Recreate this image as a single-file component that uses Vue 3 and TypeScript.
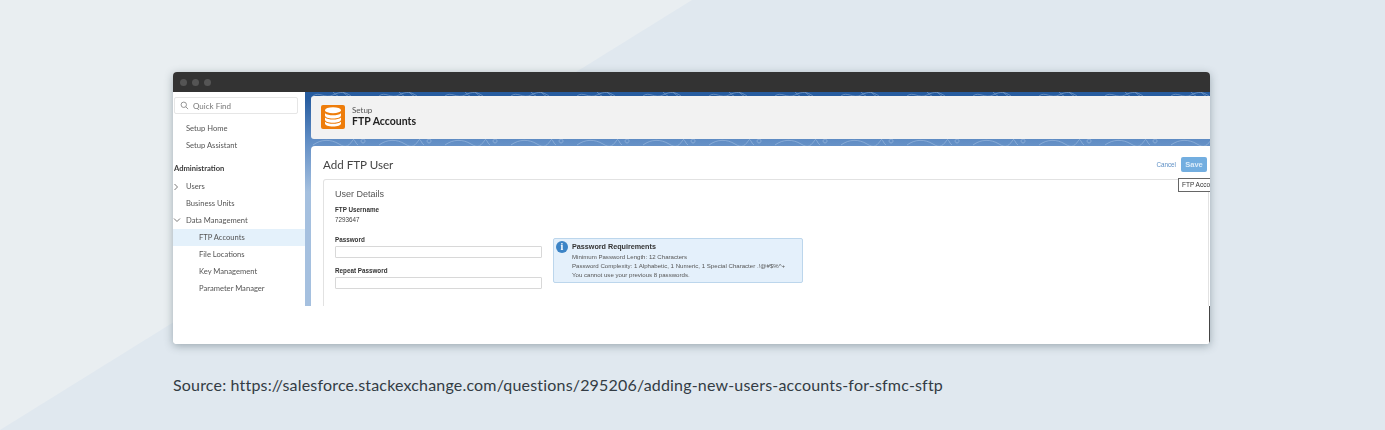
<template>
  <div class="page">
    <div class="bg-shape"></div>
    <div class="window">
      <div class="titlebar">
        <span v-for="n in 3" :key="n" class="dot"></span>
      </div>
      <div class="shot">
        <aside class="sidebar">
          <div class="quick-find">
            <svg width="9" height="9" viewBox="0 0 10 10" fill="none" stroke="#8a8a8a" stroke-width="1">
              <circle cx="4.2" cy="4.2" r="3" />
              <path d="M6.4 6.4 9 9" />
            </svg>
            <span>Quick Find</span>
          </div>
          <div class="nav-item top">Setup Home</div>
          <div class="nav-item">Setup Assistant</div>
          <div class="nav-head">Administration</div>
          <div
            v-for="item in navItems"
            :key="item.label"
            class="nav-item"
            :class="{ sub: item.sub, active: item.active }"
          >
            <svg v-if="item.caret === 'right'" class="caret" width="6" height="8" viewBox="0 0 6 8" fill="none" stroke="#555" stroke-width="0.8">
              <path d="M1.5 1 4.5 4 1.5 7" />
            </svg>
            <svg v-if="item.caret === 'down'" class="caret" width="8" height="6" viewBox="0 0 8 6" fill="none" stroke="#555" stroke-width="0.8">
              <path d="M1 1.5 4 4.5 7 1.5" />
            </svg>
            {{ item.label }}
          </div>
        </aside>
        <main class="main">
          <svg class="contours" width="905" height="60" viewBox="0 0 905 60" fill="none" stroke="#cfe0f3" stroke-width="0.7" opacity="0.5">
            <path v-for="(d, i) in contours" :key="i" :d="d" />
          </svg>
          <header class="setup-card">
            <div class="setup-icon">
              <svg width="18" height="20" viewBox="0 0 18 20" fill="#fff">
                <ellipse cx="9" cy="3.2" rx="8" ry="3" />
                <path d="M1 6.2c1.6 1.4 4.6 2 8 2s6.400-.6 8-2v2.200c0 1.700-3.600 3-8 3s-8-1.300-8-3Z" />
                <path d="M1 10.600c1.600 1.400 4.600 2 8 2s6.400-.6 8-2v2.200c0 1.700-3.600 3-8 3s-8-1.300-8-3Z" />
                <path d="M1 14.800c1.600 1.400 4.600 2 8 2s6.400-.6 8-2v1.700c0 1.700-3.600 3-8 3s-8-1.300-8-3Z" />
              </svg>
            </div>
            <div class="setup-text">
              <div class="setup-label">Setup</div>
              <div class="setup-title">FTP Accounts</div>
            </div>
          </header>
          <section class="form-card">
            <div class="form-head">
              <h2>Add FTP User</h2>
              <div class="actions">
                <span class="cancel">Cancel</span>
                <span class="save">Save</span>
              </div>
              <div class="tooltip">FTP Accounts</div>
            </div>
            <div class="details">
              <h3>User Details</h3>
              <div class="field-label">FTP Username</div>
              <div class="username">7293647</div>
              <div class="password-row">
                <div class="inputs">
                  <label class="field-label">Password</label>
                  <div class="input"></div>
                  <label class="field-label second">Repeat Password</label>
                  <div class="input"></div>
                </div>
                <div class="requirements">
                  <span class="info-icon">i</span>
                  <div>
                    <div class="req-title">Password Requirements</div>
                    <div v-for="line in requirements" :key="line" class="req-line">{{ line }}</div>
                  </div>
                </div>
              </div>
            </div>
          </section>
        </main>
      </div>
      <div class="window-foot"></div>
    </div>
    <p class="source">Source: https://salesforce.stackexchange.com/questions/295206/adding-new-users-accounts-for-sfmc-sftp</p>
  </div>
</template>

<script setup lang="ts">
interface NavItem {
  label: string
  sub?: boolean
  active?: boolean
  caret?: 'right' | 'down'
}

const navItems: NavItem[] = [
  { label: 'Users', caret: 'right' },
  { label: 'Business Units' },
  { label: 'Data Management', caret: 'down' },
  { label: 'FTP Accounts', sub: true, active: true },
  { label: 'File Locations', sub: true },
  { label: 'Key Management', sub: true },
  { label: 'Parameter Manager', sub: true },
]

const requirements = [
  'Minimum Password Length: 12 Characters',
  'Password Complexity: 1 Alphabetic, 1 Numeric, 1 Special Character .!@#$%^+',
  'You cannot use your previous 8 passwords.',
]

// topographic lines in the blue banner, top strip then the band between the cards
const contours = Array.from({ length: 14 }, (_, i) => {
  const x = i * 66 + 8
  return [
    `M${x} 4c6-5 12 3 20-1s12-3 18 1`,
    `M${x + 20} 0c3 2 2 3 5 4M${x + 30} 0c3 2 2 3 5 4`,
    `M${x} 53c8-6 18-6 26-1s10 1 14-4`,
    `M${x + 40} 47c3 2 2 4 5 6M${x + 50} 47a2 2 0 1 0 .1 0`,
  ].join('')
})
</script>

<style>
html,
body {
  margin: 0;
  padding: 0;
}
</style>

<style scoped>
.page {
  position: relative;
  width: 1385px;
  height: 430px;
  overflow: hidden;
  background: #e0e8ef;
  padding: 72px 175px 0 173px;
  box-sizing: border-box;
  font-family: Lato, sans-serif;
}

.bg-shape {
  position: absolute;
  inset: 0;
  background: #e9eef1;
  clip-path: polygon(0 0, 692px 0, 0 430px);
}

.window {
  position: relative;
  width: 1037px;
  height: 272px;
  border-radius: 4px;
  background: #fff;
  overflow: hidden;
  box-shadow: 0 2px 9px rgba(70, 90, 100, 0.45);
  display: flex;
  flex-direction: column;
}

.titlebar {
  height: 20px;
  flex: none;
  background: #333;
  display: flex;
  align-items: center;
  gap: 5px;
  padding: 0 7px;
}

.dot {
  width: 7px;
  height: 7px;
  border-radius: 50%;
  background: #555;
}

.shot {
  display: flex;
  height: 214px;
  flex: none;
  filter: blur(0.35px);
}

.sidebar {
  width: 132px;
  flex: none;
  background: #fff;
  padding-top: 5px;
  font-size: 7.6px;
  color: #555;
}

.quick-find {
  height: 17px;
  margin: 0 7px 0 1px;
  border: 1px solid #e6e6e6;
  border-radius: 2px;
  display: flex;
  align-items: center;
  gap: 4px;
  padding-left: 5px;
  font-size: 8px;
  color: #777;
  box-sizing: border-box;
}

.nav-item {
  position: relative;
  height: 17px;
  line-height: 17px;
  padding-left: 13px;
}

.nav-item.top {
  margin-top: 6px;
}

.nav-item.sub {
  padding-left: 26px;
}

.nav-item.active {
  background: #e4f1fb;
}

.nav-head {
  height: 17px;
  line-height: 17px;
  margin-top: 6px;
  margin-bottom: 1px;
  font-weight: 700;
  color: #3a3a3a;
  padding-left: 1px;
}

.caret {
  position: absolute;
  left: 0;
  top: 5px;
}

.main {
  position: relative;
  flex: 1;
  min-width: 0;
  overflow: hidden;
  background: linear-gradient(180deg, #275c9f 0, #275c9f 6px, #5f8cc4 48px, #a5c0df 100px);
  padding: 4px 0 0 6px;
}

.contours {
  position: absolute;
  left: 0;
  top: 0;
}

.setup-card {
  position: relative;
  height: 43px;
  box-sizing: border-box;
  padding: 0 0 4px 10px;
  background: #f2f2f2;
  border-radius: 3px 0 0 3px;
  display: flex;
  align-items: center;
  gap: 7px;
}

.setup-icon {
  width: 24px;
  height: 24px;
  border-radius: 2px;
  background: #ee7d0b;
  display: flex;
  align-items: center;
  justify-content: center;
  margin-top: 3px;
}

.setup-label {
  font-size: 8px;
  line-height: 10px;
  color: #555;
}

.setup-title {
  font-size: 10.5px;
  line-height: 12px;
  font-weight: 700;
  color: #222;
}

.form-card {
  position: relative;
  margin-top: 7px;
  height: 160px;
  background: #fff;
  border-radius: 4px 0 0 0;
  font-family: "Liberation Sans", Arial, sans-serif;
  padding: 0 1px 0 12px;
}

.form-head {
  position: relative;
  height: 33px;
  box-sizing: border-box;
  padding-top: 4px;
  display: flex;
  align-items: center;
  justify-content: space-between;
}

.form-head h2 {
  margin: 0;
  font-family: Lato, sans-serif;
  font-size: 11.6px;
  font-weight: 400;
  color: #444;
}

.actions {
  display: flex;
  align-items: center;
  gap: 5px;
  margin-right: 2px;
}

.cancel {
  font-size: 6.3px;
  color: #5d8fc5;
}

.save {
  width: 26px;
  height: 15px;
  background: #73aee0;
  border-radius: 2px;
  color: #dcecf9;
  font-size: 7.5px;
  font-weight: 700;
  line-height: 15px;
  text-align: center;
}

.tooltip {
  position: absolute;
  left: 855px;
  top: 32px;
  width: 40px;
  height: 14px;
  background: #fff;
  border: 1px solid #666;
  box-sizing: border-box;
  font-size: 6.5px;
  line-height: 12px;
  padding-left: 3px;
  white-space: nowrap;
  overflow: hidden;
  color: #333;
  z-index: 1;
}

.details {
  height: 127px;
  box-sizing: border-box;
  border: 1px solid #e2e2e2;
  border-bottom: 0;
  border-radius: 3px 0 0 0;
  padding: 8px 0 0 11px;
}

.details h3 {
  margin: 0 0 5px;
  font-size: 9px;
  line-height: 12px;
  font-weight: 400;
  color: #555;
}

.field-label {
  display: block;
  font-size: 6.3px;
  line-height: 9px;
  font-weight: 700;
  color: #333;
}

.username {
  margin-top: 1px;
  font-size: 6.3px;
  line-height: 9px;
  color: #444;
}

.password-row {
  display: flex;
  margin-top: 11px;
  gap: 11px;
}

.inputs {
  width: 207px;
  flex: none;
}

.input {
  height: 10px;
  margin-top: 2px;
  border: 1px solid #d8d8d8;
  border-radius: 1px;
  background: #fff;
}

.field-label.second {
  margin-top: 8px;
}

.requirements {
  width: 250px;
  height: 45px;
  margin-top: 3px;
  flex: none;
  box-sizing: border-box;
  background: #e4f0fb;
  border: 1px solid #bcd6ec;
  border-radius: 2px;
  display: flex;
  gap: 4px;
  padding: 2px 0 0 2px;
}

.info-icon {
  width: 12px;
  height: 12px;
  flex: none;
  border-radius: 50%;
  background: #3c84c6;
  color: #fff;
  font-size: 10px;
  line-height: 12px;
  font-weight: 700;
  text-align: center;
  font-family: "Liberation Serif", serif;
}

.req-title {
  font-size: 7.2px;
  line-height: 11px;
  font-weight: 700;
  color: #333;
}

.req-line {
  font-size: 6.1px;
  line-height: 9px;
  color: #555;
  white-space: nowrap;
}

.window-foot {
  flex: 1;
  background: #fff;
  position: relative;
  border-right: 1px solid #444;
}

.source {
  position: relative;
  margin: 31px 0 0;
  font-size: 16px;
  line-height: 20px;
  color: #333c44;
  white-space: nowrap;
  letter-spacing: 0.18px;
}
</style>
